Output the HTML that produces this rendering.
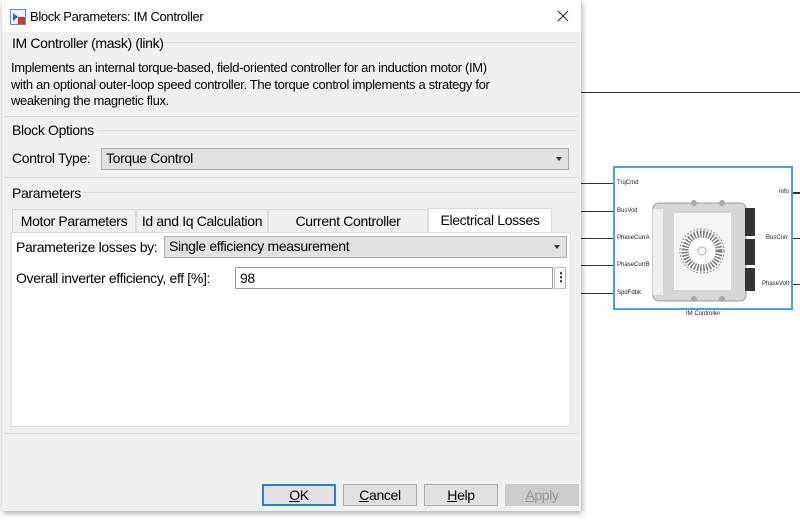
<!DOCTYPE html>
<html><head><meta charset="utf-8"><style>
*{margin:0;padding:0;box-sizing:border-box}
body{width:800px;height:531px;background:#fff;position:relative;overflow:hidden;font-family:"Liberation Sans",sans-serif;font-size:13px;letter-spacing:-0.35px;color:#000}
.a{position:absolute;white-space:nowrap}
.dlg{position:absolute;left:2px;top:0;width:579px;height:511px;background:#f0f0f0;box-shadow:1px 2px 6px rgba(0,0,0,.35)}
.sep{position:absolute;height:1px;background:#dcdcdc}
.dd{position:absolute;background:#e1e1e1;border:1px solid #adadad;padding-left:4px;line-height:19px}
.dd:after{content:"";position:absolute;right:6px;top:8px;border:3px solid transparent;border-top:4px solid #333}
.btn{position:absolute;top:484px;width:74px;height:22px;background:#e1e1e1;border:1px solid #adadad;text-align:center;line-height:20px;font-size:14px}
.tab{position:absolute;top:209px;height:24px;line-height:23px;text-align:center;background:#f0f0f0;border:1px solid #dcdcdc;border-bottom:none}
.lbl{position:absolute;font-size:6px;letter-spacing:0;color:#222}
.ln{position:absolute;height:1px;background:#333}
</style></head><body>
<div class="ln" style="left:581px;top:92px;width:219px"></div>
<div class="ln" style="left:581px;top:183px;width:32px"></div>
<div class="ln" style="left:581px;top:211px;width:32px"></div>
<div class="ln" style="left:581px;top:238px;width:32px"></div>
<div class="ln" style="left:581px;top:265px;width:32px"></div>
<div class="ln" style="left:581px;top:293px;width:32px"></div>
<div class="ln" style="left:792px;top:192px;width:8px;height:2px"></div>
<div class="ln" style="left:792px;top:238px;width:8px"></div>
<div class="ln" style="left:792px;top:284px;width:8px"></div>
<div style="position:absolute;left:613px;top:166px;width:180px;height:144px;border:2px solid #4ba3dc;background:#fff"></div>
<div class="lbl" style="left:617px;top:180px">TrqCmd</div>
<div class="lbl" style="left:617px;top:208px">BusVolt</div>
<div class="lbl" style="left:617px;top:235px">PhaseCurrA</div>
<div class="lbl" style="left:617px;top:262px">PhaseCurrB</div>
<div class="lbl" style="left:617px;top:290px">SpdFdbk</div>
<div class="lbl" style="left:779px;top:189px">Info</div>
<div class="lbl" style="left:766px;top:235px">BusCurr</div>
<div class="lbl" style="left:762px;top:281px">PhaseVolt</div>
<div class="lbl" style="left:686px;top:311px">IM Controller</div>
<svg class="a" style="left:650px;top:195px" width="110" height="110">
<rect x="3" y="8" width="93" height="98" rx="6" fill="#d6d6d6" stroke="#999"/>
<rect x="3" y="14" width="10" height="86" fill="#eee"/>
<circle cx="44" cy="8" r="3" fill="#aaa"/><circle cx="72" cy="8" r="3" fill="#aaa"/>
<circle cx="44" cy="104" r="3" fill="#aaa"/><circle cx="72" cy="104" r="3" fill="#aaa"/>
<rect x="24" y="18" width="57" height="77" fill="#f5f5f5"/>
<circle cx="52" cy="56" r="22" fill="#fff" stroke="#888" stroke-dasharray="2 1.5"/>
<circle cx="52" cy="56" r="17" fill="none" stroke="#777" stroke-width="7" stroke-dasharray="1.5 1.5"/>
<circle cx="52" cy="56" r="4" fill="#fff" stroke="#aaa"/>
<rect x="95" y="13" width="10" height="28" fill="#333"/><rect x="95" y="44" width="10" height="26" fill="#333"/><rect x="95" y="73" width="10" height="23" fill="#333"/>
</svg>
<div class="dlg">
<div style="position:absolute;left:0;top:0;width:579px;height:32px;background:#fff"></div>
<svg class="a" style="left:8px;top:9px" width="16" height="16"><rect x="0.5" y="0.5" width="15" height="15" fill="#eef" stroke="#6a8ab8"/><path d="M3 4l5 4-5 4z" fill="#2a6db5"/><rect x="8" y="8" width="7" height="7" fill="#d03a2a"/></svg>
<div class="a" style="left:28px;top:9px;font-size:13px">Block Parameters: IM Controller</div>
<svg class="a" style="left:555px;top:10px" width="12" height="12"><path d="M1 1L11 11M11 1L1 11" stroke="#222" stroke-width="1"/></svg>
<div class="sep" style="left:100px;top:42px;width:474px"></div>
<div class="a" style="left:10px;top:35px;font-size:14px">IM Controller (mask) (link)</div>
<div class="a" style="left:9px;top:60px;font-size:13px;line-height:16.5px;white-space:normal;width:560px">Implements an internal torque-based, field-oriented controller for an induction motor (IM)<br>with an optional outer-loop speed controller. The torque control implements a strategy for<br>weakening the magnetic flux.</div>
<div class="sep" style="left:2px;top:116px;width:574px"></div>
<div class="sep" style="left:95px;top:130px;width:479px"></div>
<div class="a" style="left:10px;top:122px;font-size:14px">Block Options</div>
<div class="a" style="left:10px;top:150px;font-size:14px">Control Type:</div>
<div class="dd" style="left:99px;top:148px;width:468px;height:22px;font-size:14px">Torque Control</div>
<div class="sep" style="left:2px;top:177px;width:574px"></div>
<div class="sep" style="left:80px;top:192px;width:494px"></div>
<div class="a" style="left:10px;top:185px;font-size:14px">Parameters</div>
<div class="tab" style="left:10px;width:124px;font-size:14px">Motor Parameters</div>
<div class="tab" style="left:134px;width:132px;font-size:14px">Id and Iq Calculation</div>
<div class="tab" style="left:266px;width:160px;font-size:14px">Current Controller</div>
<div class="tab" style="left:426px;width:124px;background:#fff;top:208px;height:25px;font-size:14px">Electrical Losses</div>
<div style="position:absolute;left:9px;top:232px;width:560px;height:195px;background:#fff;border:1px solid #dcdcdc"></div>
<div class="a" style="left:14px;top:239px;font-size:14px">Parameterize losses by:</div>
<div class="dd" style="left:162px;top:236px;width:403px;height:22px;font-size:14px">Single efficiency measurement</div>
<div class="a" style="left:14px;top:270px;font-size:14px">Overall inverter efficiency, eff [%]:</div>
<div style="position:absolute;left:233px;top:267px;width:318px;height:22px;border:1px solid #999;background:#fff;padding-left:4px;line-height:20px;font-size:14px">98</div>
<div style="position:absolute;left:552px;top:267px;width:12px;height:22px;border:1px solid #bbb;background:#fafafa;text-align:center;font-size:12px;line-height:18px;font-weight:bold;letter-spacing:0">⋮</div>
<div class="sep" style="left:2px;top:433px;width:574px"></div>
<div class="btn" style="left:260px;border:2px solid #2e7bd0;line-height:18px"><u>O</u>K</div>
<div class="btn" style="left:341px"><u>C</u>ancel</div>
<div class="btn" style="left:422px"><u>H</u>elp</div>
<div class="btn" style="left:503px;background:#ccc;border-color:#ccc;color:#999"><u>A</u>pply</div>
</div>
</body></html>
